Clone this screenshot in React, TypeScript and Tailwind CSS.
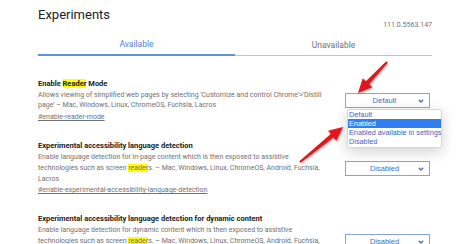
import React from "react";

type Experiment = {
  title: React.ReactNode;
  lines: React.ReactNode[];
  link: string;
  value: string;
};

const Mark = ({ children }: { children: React.ReactNode }) => <span className="bg-[#ffff00]">{children}</span>;

const experiments: Experiment[] = [
  {
    title: (
      <>
        Enable <Mark>Reader</Mark> Mode
      </>
    ),
    lines: [
      "Allows viewing of simplified web pages by selecting 'Customize and control Chrome'>'Distill",
      "page' – Mac, Windows, Linux, ChromeOS, Fuchsia, Lacros"
    ],
    link: "#enable-reader-mode",
    value: "Default"
  },
  {
    title: "Experimental accessibility language detection",
    lines: [
      "Enable language detection for in-page content which is then exposed to assistive",
      <>
        technologies such as screen <Mark>reader</Mark>s. – Mac, Windows, Linux, ChromeOS, Android, Fuchsia,
      </>,
      "Lacros"
    ],
    link: "#enable-experimental-accessibility-language-detection",
    value: "Disabled"
  },
  {
    title: "Experimental accessibility language detection for dynamic content",
    lines: [
      "Enable language detection for dynamic content which is then exposed to assistive",
      <>
        technologies such as screen <Mark>reader</Mark>s. – Mac, Windows, Linux, ChromeOS, Android, Fuchsia,
      </>,
      "Lacros"
    ],
    link: "#enable-experimental-accessibility-language-detection-dynamic",
    value: "Disabled"
  }
];

function SelectBox({ value }: { value: string }) {
  return (
    <div className="relative mr-[2px] flex h-[15px] w-[85px] shrink-0 items-center justify-center border border-[#86a4dc] bg-white font-['Liberation_Sans',sans-serif] text-[7.5px] text-[#4a6cc0]">
      <span className="pr-[6px]">{value}</span>
      <svg className="absolute right-[5px] top-[5px]" width="6" height="4" viewBox="0 0 6 4">
        <polyline points="0.8,0.8 3,3 5.2,0.8" fill="none" stroke="#4a6cc0" strokeWidth="1.3" />
      </svg>
    </div>
  );
}

function ExperimentRow({ item }: { item: Experiment }) {
  return (
    <div className="flex items-center py-[8.5px]">
      <div className="flex-1">
        <p className="text-[7.5px] font-bold leading-[11px] text-[#202124]">{item.title}</p>
        <p className="mt-[1px] text-[7px] leading-[10.8px] text-[#6f7175]">
          {item.lines.map((line, i) => (
            <span key={i} className="block whitespace-nowrap">
              {line}
            </span>
          ))}
        </p>
        <p className="mt-[1px] text-[7px] leading-[11px] text-[#6f7175] underline">{item.link}</p>
      </div>
      <SelectBox value={item.value} />
    </div>
  );
}

function Arrows() {
  return (
    <svg className="pointer-events-none absolute left-0 top-0 drop-shadow-[1px_1px_1px_rgba(0,0,0,0.35)]" width="474" height="244" viewBox="0 0 474 244">
      <polygon
        fill="#e3151d"
        points="387.73,62.68 369.24,84.35 372.31,87.22 358,93 362.82,78.34 365.88,81.21 386.27,61.32"
      />
      <polygon
        fill="#e3151d"
        points="300.63,162.78 333.59,137.62 336.24,140.88 343,127 328.04,130.8 330.69,134.06 299.37,161.22"
      />
    </svg>
  );
}

export default function App() {
  const options = ["Default", "Enabled", "Enabled available in settings", "Disabled"];

  return (
    <div className="relative h-[244px] w-[474px] overflow-hidden bg-white font-['Roboto',sans-serif]">
      <div className="pl-[38px] pr-[42px]">
        <div className="flex items-start justify-between pt-[6px]">
          <h1 className="text-[13px] leading-[18px] text-[#202124]">Experiments</h1>
          <span className="mt-[15px] text-[7px] leading-[8px] text-[#6f7175]">111.0.5563.147</span>
        </div>

        <div className="mt-[3px] flex items-end">
          <div className="flex h-[24px] flex-1 items-center justify-center border-b-2 border-[#5f92d8] pt-[2px] text-[8.5px] text-[#4f7fd4]">
            Available
          </div>
          <div className="flex h-[23px] flex-1 items-center justify-center border-b border-[#c4c4c4] pt-[2px] text-[8.5px] text-[#6f7175]">
            Unavailable
          </div>
        </div>

        <div className="mt-[13px]">
          {experiments.map((item, i) => (
            <ExperimentRow key={i} item={item} />
          ))}
        </div>
      </div>

      <div className="absolute left-[347px] top-[108.5px] w-[95px] rounded-[3px] border border-[#d6d6d6] bg-white py-[0.5px] font-['Liberation_Sans',sans-serif] text-[7.3px] text-[#3d63c4] shadow-[0_4px_14px_rgba(0,0,0,0.18)]">
        {options.map((opt) => (
          <div
            key={opt}
            className={
              opt === "Enabled"
                ? "h-[9.1px] whitespace-nowrap bg-[#2f7ff0] px-[1px] leading-[9.1px] text-white"
                : "h-[9.1px] whitespace-nowrap px-[1px] leading-[9.1px]"
            }
          >
            {opt}
          </div>
        ))}
      </div>

      <Arrows />
    </div>
  );
}
